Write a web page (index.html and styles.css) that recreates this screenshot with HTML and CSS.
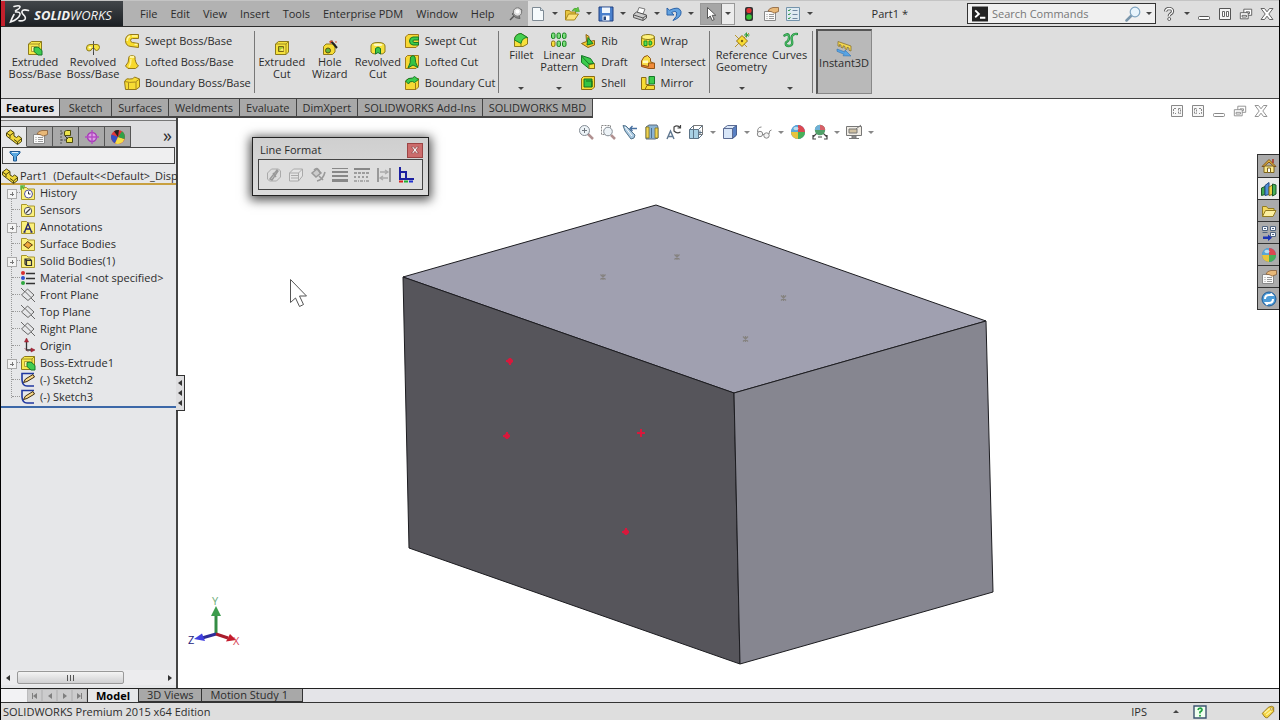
FILE: index.html
```
<!DOCTYPE html>
<html lang="en">
<head>
    <meta charset="utf-8">
    <title>SOLIDWORKS - Part1</title>
    <link rel="stylesheet" href="styles.css">
</head>
<body>
    <!-- icon sprite -->
    <svg class="sprite" width="0" height="0" aria-hidden="true">
        <symbol id="i-ds" viewBox="0 0 21 20">
            <g fill="none" stroke="#f2f2f2" stroke-width="1.6" stroke-linecap="round">
                <path d="M5 2.500q5-1.500 6 0q.3 1.700-4.500 4.200M6.500 8q5-.5 4.500 2.500q-1 4.500-9.500 7.500q1.500-4 3.500-7.500"/>
                <path d="M19.500 6.500q-5.500-1.500-6.500.8q-.6 1.700 2 4q2.500 2.800.5 4.500q-2 1.300-5.500 1"/>
            </g>
        </symbol>
        <symbol id="i-pin" viewBox="0 0 16 16">
            <path d="M2 14l4-4" stroke="#555" stroke-width="1.500"/>
            <path d="M4 8q3 5 8 4.500l-1-3.500 3-5-4-2z" fill="#888" stroke="#666"/>
            <circle cx="9.500" cy="6" r="4.200" fill="#e0e0e0" stroke="#777"/>
            <circle cx="9.500" cy="5.500" r="2" fill="#fff"/>
        </symbol>
        <symbol id="i-new" viewBox="0 0 16 16">
            <path d="M2.500 1.500h8l3 3v10h-11z" fill="#f6fafc" stroke="#7e8a94"/>
            <path d="M10.500 1.500v3h3" fill="#cfdbe4" stroke="#7e8a94"/>
        </symbol>
        <symbol id="i-open" viewBox="0 0 16 16">
            <path d="M1.500 14V4.500h4l1 1.500h5v3" fill="#e8c640" stroke="#a8861c"/>
            <path d="M1.500 14l3-6h10l-4 6z" fill="#fbe27a" stroke="#a8861c"/>
            <path d="M8 5q2-4 5-2.500l1-1.500 1.500 4.500-4.500.5 1-1.500q-2-.5-4 .5z" fill="#5cc83c" stroke="#3a8e28" stroke-width=".5"/>
        </symbol>
        <symbol id="i-save" viewBox="0 0 16 16">
            <path d="M1 1h14v14H1z" fill="#4a80cc" stroke="#1f3f80"/>
            <path d="M4 1.500h8V7H4z" fill="#f0f6fc"/>
            <path d="M4.500 9.500h7v5h-7z" fill="#fff"/>
            <path d="M5.500 10.500h2.500V14H5.500z" fill="#28487c"/>
        </symbol>
        <symbol id="i-print" viewBox="0 0 16 16">
            <path d="M5 7l2-5.500 6 1.500-2 5z" fill="#fff" stroke="#777"/>
            <path d="M1.500 8.500l3-2.500 10 3v3l-3.500 2.500-9.500-3z" fill="#ccc" stroke="#555"/>
            <path d="M2 9l9 3 3.500-2.500M11 12v2.500" fill="none" stroke="#555"/>
        </symbol>
        <symbol id="i-undo" viewBox="0 0 16 16">
            <path d="M1 2v7h7L5.500 6.700q4-2.700 5.300.3q.7 3-3.800 7.500q9-3.500 8-9q-2-6-11.500-1.300z" fill="#62a2e0" stroke="#2a62a8"/>
        </symbol>
        <symbol id="i-arrow" viewBox="0 0 16 16">
            <path d="M4.500 1.500v11l2.700-2.500 2 4.500 2-1-2-4.200h3.600z" fill="#fff" stroke="#555"/>
        </symbol>
        <symbol id="i-light" viewBox="0 0 10 16">
            <rect x="1" y="1" width="8" height="14" rx="2" fill="#333"/>
            <circle cx="5" cy="4.500" r="2.600" fill="#e23434"/>
            <circle cx="5" cy="11" r="2.800" fill="#36c436"/>
        </symbol>
        <symbol id="i-props" viewBox="0 0 16 16">
            <path d="M1.500 5.500h11v9h-11z" fill="#fafafa" stroke="#888"/>
            <path d="M3.500 8.500h1M6 8.500h5M3.500 10.500h1M6 10.500h5M3.500 12.500h1M6 12.500h5" stroke="#999"/>
            <path d="M5 5q1-3 5-3.500h5.500v4l-4 1.500q-2 0-2-1z" fill="#e8b878" stroke="#8a6038" stroke-width=".8"/>
        </symbol>
        <symbol id="i-options" viewBox="0 0 16 16">
            <path d="M1.500 1.500h13v13h-13z" fill="#dfeaf2" stroke="#7494ac"/>
            <path d="M3 4l1 1 1.500-2M3 8l1 1 1.500-2M3 12l1 1 1.500-2" fill="none" stroke="#3a9a50"/>
            <path d="M7.500 4.500h5M7.500 8.500h5M7.500 12.500h5" stroke="#7088a0"/>
        </symbol>
        <symbol id="i-prompt" viewBox="0 0 15 14">
            <path d="M0 0h15v14H0z" fill="#222"/>
            <path d="M3 3.500l3.500 3.500L3 10M7.500 10.500h5" fill="none" stroke="#fff" stroke-width="1.700"/>
        </symbol>
        <symbol id="i-search" viewBox="0 0 16 16">
            <path d="M1.500 14.500l5-5" stroke="#7a96ac" stroke-width="2.500" stroke-linecap="round"/>
            <circle cx="10" cy="6" r="4.800" fill="#e8f4fc" stroke="#7fa4c0" stroke-width="1.200"/>
        </symbol>
        <symbol id="i-help" viewBox="0 0 12 14">
            <path d="M2.500 4.500q.5-3 3.700-3q3.500.2 3.300 3q-.2 1.600-2 2.500q-1.300.8-1.300 2.300" fill="none" stroke="#555" stroke-width="3.200"/>
            <path d="M2.500 4.500q.5-3 3.700-3q3.500.2 3.300 3q-.2 1.600-2 2.500q-1.300.8-1.300 2.300" fill="none" stroke="#fff" stroke-width="1.300"/>
            <circle cx="6.200" cy="12" r="1.500" fill="#fff" stroke="#555" stroke-width=".9"/>
        </symbol>
        <symbol id="i-min" viewBox="0 0 14 14">
            <rect x="1.500" y="9.500" width="11" height="3" rx="1" fill="#fff" stroke="currentColor"/>
        </symbol>
        <symbol id="i-tile" viewBox="0 0 14 14">
            <path d="M1.500 1.500h11v11h-11z" fill="#f4f4f4" stroke="currentColor"/>
            <path d="M4.500 4.500h2v5h-2zM8.500 4.500h2v5h-2z" fill="#fff" stroke="currentColor" stroke-width=".9"/>
        </symbol>
        <symbol id="i-tilel" viewBox="0 0 14 14">
            <path d="M1.500 1.500h11v11h-11z" fill="#f8f8f8" stroke="currentColor"/>
            <path d="M6 4.500H3.500V9.500H6M8.500 4.500h2v5h-2z" fill="none" stroke="currentColor" stroke-dasharray="2 1"/>
        </symbol>
        <symbol id="i-tiler" viewBox="0 0 14 14">
            <path d="M1.500 1.500h11v11h-11z" fill="#f8f8f8" stroke="currentColor"/>
            <path d="M3.500 4.500h2v5h-2zM8 4.500h2.500v5H8" fill="none" stroke="currentColor" stroke-dasharray="2 1"/>
        </symbol>
        <symbol id="i-restore" viewBox="0 0 16 14">
            <path d="M5.500 1.500h9v7h-9z" fill="#fff" stroke="currentColor"/>
            <path d="M8 4.500h4v2H8z" fill="none" stroke="currentColor"/>
            <path d="M1.500 5.500h9v7h-9z" fill="#fff" stroke="currentColor"/>
            <path d="M3.500 8.500h5v2h-5z" fill="none" stroke="currentColor"/>
        </symbol>
        <symbol id="i-close" viewBox="0 0 14 14">
            <path d="M1 1.500h3.500L7 4.800l2.500-3.300H13L8.800 7l4.200 5.500H9.500L7 9.200l-2.500 3.300H1L5.200 7z" fill="#fff" stroke="currentColor" stroke-width=".9"/>
        </symbol>

        <!-- feature icons -->
        <symbol id="i-extrude" viewBox="0 0 16 16">
            <path d="M1.500 4l3-2.500h10V12L12 14.500H1.500z" fill="#f6e84c" stroke="#8c7a1c"/>
            <path d="M1.500 4H12v10.500M12 4l2.500-2.500" fill="none" stroke="#8c7a1c" stroke-width=".8"/>
            <path d="M4.500 6.500h5v5h-5z" fill="#fdf7a4" stroke="#a48c24" stroke-width=".8"/>
            <path d="M7 7.500l4-.5 4 3.500V15h-4L7 11.500z" fill="#40cc50" stroke="#16782a"/>
        </symbol>
        <symbol id="i-revolve" viewBox="0 0 16 16">
            <path d="M8.500 1v14" stroke="#555"/>
            <path d="M1.500 8q0-3.500 3.500-3.500h7q2.500 0 2.500 3q-.5 3-3 3q-1.500 0-2-2H7q-.5 2.500-3 2.500t-2.500-3z" fill="#f5e23e" stroke="#8c7a1c"/>
            <ellipse cx="5" cy="7.500" rx="1.500" ry="1" fill="#fffbd0"/>
            <path d="M8.500 5v4M8.500 12v3" stroke="#444"/>
        </symbol>
        <symbol id="i-sweep" viewBox="0 0 16 16">
            <path d="M14.500 1.500H7q-5.500.5-5.500 6t5.500 6l7.500 1V10.500L8.500 9.500Q6.500 9 6.500 7.300T8.500 5.500h6z" fill="#f8dc2c" stroke="#94781a"/>
            <path d="M6 3q-3 1.500-2.800 5M8 3h5.500M10.500 11.500h3" fill="none" stroke="#fff6a0" stroke-width="1.500"/>
        </symbol>
        <symbol id="i-loft" viewBox="0 0 16 16">
            <path d="M5 2.500q3-2 6 0q-.3 6 3.500 9.500l-3 2.500H4L1.500 12Q5 9 5 2.500z" fill="#f7d82c" stroke="#94781a"/>
            <ellipse cx="8" cy="3" rx="2.500" ry="1.200" fill="#fff6a0"/>
            <path d="M7 5q0 5-2 8" fill="none" stroke="#fff28c" stroke-width="1.500"/>
        </symbol>
        <symbol id="i-boundary" viewBox="0 0 16 16">
            <path d="M.5 6.500q2-4 5-2.500 4 .5 5-2l5 2V12L12 14.500H1.500z" fill="#f7dc34" stroke="#94781a"/>
            <path d="M.5 6.500q5 1.500 11 .5l4-3M12 7v7.500M4.500 7.500v7" fill="none" stroke="#a8881c"/>
        </symbol>
        <symbol id="i-cut" viewBox="0 0 16 16">
            <path d="M1.500 4l3-2.500h10V12L12 14.500H1.500z" fill="#f6e23c" stroke="#8c7a1c"/>
            <path d="M1.500 4H12v10.500M12 4l2.500-2.500" fill="none" stroke="#8c7a1c" stroke-width=".8"/>
            <path d="M4.500 6.500h5v5h-5z" fill="#a4c832" stroke="#7c6414"/>
            <path d="M5.500 10.500l2.500-2h1.500v2.500z" fill="#fff06c"/>
        </symbol>
        <symbol id="i-hole" viewBox="0 0 16 16">
            <path d="M1.500 6.500L4 4h9v8l-2.500 2.500h-9z" fill="#f6dc34" stroke="#8c7a1c"/>
            <circle cx="6" cy="10.500" r="2.500" fill="#64b83c" stroke="#5c5010"/>
            <path d="M9 1l6 7" stroke="#222" stroke-width="2"/>
            <path d="M7 2l4-1M8.500.5v3M13 2h2" stroke="#d85030"/>
        </symbol>
        <symbol id="i-revcut" viewBox="0 0 16 16">
            <path d="M1 6q0-3.500 7-3.500T15 6v6q-2 2.500-4.500 2V9q-2.500-1.500-5 0v5Q2 14 1 12z" fill="#f6e03c" stroke="#8c7a1c"/>
            <path d="M5.500 14V8.500q2.500-3 5 0V14L8 12.500z" fill="#3cc44c" stroke="#187828"/>
            <ellipse cx="8" cy="4.800" rx="4.500" ry="1.300" fill="#fffac0"/>
        </symbol>
        <symbol id="i-sweepcut" viewBox="0 0 16 16">
            <path d="M1.500 4L4 1.500h10.500V12L12 14.500H1.500z" fill="#f6d834" stroke="#a0781a"/>
            <path d="M14.500 4H9Q5.500 4.500 5.500 8T9 12h5.500V9.500H10q-1 0-1-1.300T10 7h4.500z" fill="#3ccc4c" stroke="#167828"/>
        </symbol>
        <symbol id="i-loftcut" viewBox="0 0 16 16">
            <path d="M1.500 3.500l2-2h11V12L12 14.500H1.500z" fill="#f6d834" stroke="#a0781a"/>
            <path d="M6.500 3L9 1.500 11 3q0 6 3 10.500L9 11l-5 3Q7 9 6.500 3z" fill="#34c444" stroke="#167828"/>
        </symbol>
        <symbol id="i-boundcut" viewBox="0 0 16 16">
            <path d="M1.500 6l3-2.500h10V12L12 14.500H1.500z" fill="#f6d834" stroke="#a0781a"/>
            <path d="M1.500 6q3-3.500 7-3l2-1.500 4 3-4 3-2-1Q5 6 4.500 9z" fill="#3ccc4c" stroke="#167828"/>
            <path d="M11.500 8v6" stroke="#a0781a"/>
        </symbol>
        <symbol id="i-fillet" viewBox="0 0 16 16">
            <path d="M1.500 14.500V8q0-6 6.500-6.500l6.500 4V12L10 14.500z" fill="#f8e03c" stroke="#8c7a1c"/>
            <path d="M1.500 8Q2 2 8 1.500l6.500 4Q9 5.500 8 11.500z" fill="#46d050" stroke="#188028"/>
            <path d="M8 11.500v3" stroke="#8c7a1c"/>
        </symbol>
        <symbol id="i-pattern" viewBox="0 0 16 16">
            <g fill="#7ce07c" stroke="#14801e">
                <rect x=".5" y="1" width="3.500" height="5.500" rx="1.500"/>
                <rect x="6" y="1" width="3.500" height="5.500" rx="1.500"/>
                <rect x="11.500" y="1" width="3.500" height="5.500" rx="1.500"/>
                <rect x="6" y="9" width="3.500" height="5.500" rx="1.500"/>
                <rect x="11.500" y="9" width="3.500" height="5.500" rx="1.500"/>
            </g>
            <rect x=".5" y="9" width="3.500" height="5.500" rx="1.500" fill="#f8e03c" stroke="#8c6c14"/>
        </symbol>
        <symbol id="i-rib" viewBox="0 0 16 16">
            <path d="M6 1.500l3 2v5l5.500-1V12L8 14.500l-6.500-4 5-2z" fill="#f8cc2c" stroke="#8c6414"/>
            <path d="M8 4.500l5 6-6 1.500z" fill="#34c444" stroke="#167828"/>
        </symbol>
        <symbol id="i-draft" viewBox="0 0 16 16">
            <path d="M1.500 1.500l9 3 4 6v4H9l-7.500-6z" fill="#3ccc4c" stroke="#167828"/>
            <path d="M9 10.500l5.500-1v5H9z" fill="#f8e03c" stroke="#8c6c14"/>
            <path d="M1.500 2L9 10M9 10l5-.5" stroke="#167828" fill="none"/>
        </symbol>
        <symbol id="i-shell" viewBox="0 0 16 16">
            <path d="M1.500 3.500l2-2h11v10.500L12 14.500H1.500z" fill="#f8dc34" stroke="#8c6c14"/>
            <path d="M4 4h8v8H4z" fill="#34c444" stroke="#14701e"/>
            <path d="M6 6h6v6" fill="none" stroke="#14701e"/>
        </symbol>
        <symbol id="i-wrap" viewBox="0 0 16 16">
            <path d="M1.500 4v8q2 2.500 6.500 2.500t6.500-2.500V4z" fill="#f6d834" stroke="#8c7a1c"/>
            <ellipse cx="8" cy="4" rx="6.500" ry="2.500" fill="#fff27c" stroke="#8c7a1c"/>
            <path d="M4 8h3v4.500H4zM9 8h2q2 2 0 4H9z" fill="#5ce050" stroke="#169028"/>
        </symbol>
        <symbol id="i-intersect" viewBox="0 0 16 16">
            <path d="M1.500 7q2-5.500 6-5.500l3 3v3l4 2.500v4H9l-7.500-2z" fill="#f8dc44" stroke="#945414"/>
            <path d="M1.500 11l7 1.500V9h6v5.500H9L1.500 12.500z" fill="#f08c3c" stroke="#945414"/>
            <path d="M3 6.500h5V9H3z" fill="#fffac0"/>
        </symbol>
        <symbol id="i-mirror" viewBox="0 0 16 16">
            <path d="M1.500 2.500h4.500v7h3V12l-2 2.500H1.500z" fill="#f8dc34" stroke="#8c6c14"/>
            <path d="M9 1.500h5.500V9H9z" fill="#3ccc4c" stroke="#167828"/>
            <path d="M7 10.500h7.500v4H5z" fill="#f8dc34" stroke="#8c6c14"/>
        </symbol>
        <symbol id="i-refgeo" viewBox="0 0 16 16">
            <path d="M1 3l12 12M1 15L15 1" stroke="#b8962c"/>
            <path d="M8 3.500l5.500 5.500L8 14.500 2.500 9z" fill="#f8dc34" stroke="#94701a"/>
            <path d="M12.500.5v5M10 3h5.500M11 1.500l3.500 3" stroke="#30a040"/>
            <circle cx="8" cy="9" r="1.200" fill="#7c6414"/>
        </symbol>
        <symbol id="i-curves" viewBox="0 0 16 16">
            <path d="M2.500 3.500q4-3 4.500 1t-3 6q-1 3.500 3 3.500t3-5 1-6q1-1.500 4-1" fill="none" stroke="#1e8c3c" stroke-width="2.400" stroke-linecap="round"/>
            <path d="M2.500 3.500q4-3 4.500 1t-3 6q-1 3.500 3 3.500t3-5 1-6q1-1.500 4-1" fill="none" stroke="#6cd884" stroke-width=".8"/>
        </symbol>
        <symbol id="i-instant" viewBox="0 0 16 16">
            <path d="M2 .5l13 4.500v5l-2-.7V7l-2-.7v2.200l-2-.7V5.500L7 4.800V7L5 6.300V4L3.500 3.500V5.500L2 5z" fill="#f4d850" stroke="#8c7430" stroke-width=".8"/>
            <path d="M1 8l8 3V9l6 6-8-.2 1-1.500-7-3z" fill="#58a4e4" stroke="#2f74b4" stroke-width=".6"/>
        </symbol>

        <!-- tree icons -->
        <symbol id="i-part" viewBox="0 0 16 16">
            <path d="M.5 4l4-3L8 3.500V7l2.500 1.500 2-1.500 3 2v3.500L11.500 15.500.500 7z" fill="#f0d83c" stroke="#4c4410"/>
            <path d="M.5 4L4 6.500 8 3.500M4 6.500V9M8 10.500l3.500 2.500 4-3.500M11.500 13v2" fill="none" stroke="#4c4410"/>
        </symbol>
        <symbol id="i-config" viewBox="0 0 16 16">
            <path d="M3 1v14M3 4h5M3 11h5" stroke="#555" stroke-dasharray="2 1"/>
            <path d="M6.500 2.500l2-1h4v5h-6zM8.500 9.500l2-1h4v5h-6z" fill="#ece24c" stroke="#4c4c10"/>
            <path d="M7 7l3 3" stroke="#333"/>
        </symbol>
        <symbol id="i-target" viewBox="0 0 16 16">
            <circle cx="8" cy="8" r="4.500" fill="#dca0e4" stroke="#a83cb8" stroke-width="1.500"/>
            <path d="M8 1v14M1 8h14" stroke="#b44cc4" stroke-width="1.400"/>
        </symbol>
        <symbol id="i-ball" viewBox="0 0 16 16">
            <circle cx="8" cy="8" r="7" fill="#3c78d0"/>
            <path d="M8 8V1a7 7 0 0 0-7 7z" fill="#58a8d8"/>
            <path d="M8 8V1a7 7 0 0 1 7 7z" fill="#dc4850"/>
            <path d="M8 8H1a7 7 0 0 0 7 7z" fill="#e8c43c"/>
            <path d="M8 8h7a7 7 0 0 1-7 7z" fill="#48b058"/>
            <ellipse cx="6" cy="4.500" rx="2.500" ry="1.700" fill="#fff" opacity=".6"/>
        </symbol>
        <symbol id="i-colors" viewBox="0 0 16 16">
            <circle cx="8" cy="8" r="7" fill="#e03838"/>
            <path d="M8 8L1.500 5.500A7 7 0 0 0 5 14.300z" fill="#3450c4"/>
            <path d="M8 8l-3 6.300A7 7 0 0 0 14.500 10z" fill="#f4e048"/>
            <path d="M8 8l6.500 2A7 7 0 0 0 12 2.300z" fill="#30a048"/>
            <path d="M8 8L4 2.300A7 7 0 0 1 9 1z" fill="#222"/>
        </symbol>
        <symbol id="i-funnel" viewBox="0 0 12 12">
            <path d="M1 1.500h10v1.500L7.500 6.500V11h-3V6.500L1 3z" fill="#58a8e0" stroke="#205890"/>
            <path d="M3 2.500h6" stroke="#d8f0ff"/>
        </symbol>
        <symbol id="i-folder" viewBox="0 0 16 16">
            <path d="M1.500 14.500v-12h5l1.500 1.500h6.500v10.500z" fill="#fbf07c" stroke="#a8962c"/>
        </symbol>
        <symbol id="i-history" viewBox="0 0 16 16">
            <use href="#i-folder"/>
            <circle cx="8.500" cy="9" r="4" fill="#fff" stroke="#5050a0"/>
            <path d="M8.500 6.500V9h2" fill="none" stroke="#333"/>
            <path d="M1 1l3 3M1 5V1h4" stroke="#58b83c" fill="none" stroke-width="1.500"/>
        </symbol>
        <symbol id="i-sensor" viewBox="0 0 16 16">
            <use href="#i-folder"/>
            <circle cx="8" cy="9" r="3.700" fill="#f4f4f4" stroke="#555"/>
            <path d="M6 11l4-4" stroke="#444" stroke-width="1.300"/>
        </symbol>
        <symbol id="i-annot" viewBox="0 0 16 16">
            <use href="#i-folder"/>
            <path d="M4.500 13L8 4.500l3.500 8.500M6 10h4M3.500 13h2M10.500 13h2" fill="none" stroke="#22226c" stroke-width="1.300"/>
        </symbol>
        <symbol id="i-surface" viewBox="0 0 16 16">
            <use href="#i-folder"/>
            <path d="M3.500 9Q6 8 7.500 5.500L12.500 9Q10 10 8.500 12.500z" fill="#f0a83c" stroke="#5c3c10"/>
        </symbol>
        <symbol id="i-solid" viewBox="0 0 16 16">
            <use href="#i-folder"/>
            <path d="M5 6h5l1.500 1.500v5h-5L5 11zM5 6l1.500 1.500H11.500M6.500 7.500v5" fill="none" stroke="#333" stroke-width="1.200"/>
        </symbol>
        <symbol id="i-material" viewBox="0 0 16 16">
            <circle cx="3" cy="3" r="2" fill="#d83030"/>
            <circle cx="3" cy="8" r="2" fill="#3050d0"/>
            <circle cx="3" cy="13" r="2" fill="#30a840"/>
            <path d="M6 3.500h9M6 8.500h9M6 13.500h9" stroke="#333" stroke-width="1.500"/>
        </symbol>
        <symbol id="i-plane" viewBox="0 0 16 16">
            <path d="M7.500 2l6.500 6-6 5.500L1.500 8zM1 1l4 4M11 11l4 4M5 4.500l6 6" fill="none" stroke="#666"/>
        </symbol>
        <symbol id="i-origin" viewBox="0 0 16 16">
            <path d="M6.500 2v10h7" fill="none" stroke="#333" stroke-width="1.300"/>
            <path d="M6.500 0l2 4h-4zM15 12l-4-2v4zM4.500 10l4 4" fill="#b02838" stroke="#902030" stroke-width=".6"/>
        </symbol>
        <symbol id="i-sketch" viewBox="0 0 16 16">
            <path d="M14 1.500H2V8q.5 6 5 6h7" fill="none" stroke="#2038a0" stroke-width="1.600"/>
            <path d="M3.500 10.500l2-3.500 7.500-4.500 1.500 2.500L7 9.500z" fill="#f8d888" stroke="#3c2c10"/>
        </symbol>

        <!-- view icons -->
        <symbol id="i-zoomfit" viewBox="0 0 16 16">
            <path d="M10 10l5 5" stroke="#b09090" stroke-width="2.500"/>
            <circle cx="6.500" cy="6.500" r="5" fill="#edf3f7" stroke="#848c94"/>
            <path d="M6.500 4v5M4 6.500h5" stroke="#707880"/>
        </symbol>
        <symbol id="i-zoomarea" viewBox="0 0 16 16">
            <path d="M11 11l4 4" stroke="#b09090" stroke-width="2.500"/>
            <path d="M1.500 1.500h9v9h-9z" fill="none" stroke="#888" stroke-dasharray="2 1"/>
            <circle cx="8" cy="7.500" r="4.300" fill="#edf3f7" stroke="#848c94"/>
        </symbol>
        <symbol id="i-prev" viewBox="0 0 16 16">
            <path d="M1 1.500l3 .5 9 9-1 3-3 1-6-8z" fill="#a8c8e0" stroke="#54748c"/>
            <path d="M3 3l7 9" stroke="#fff"/>
            <path d="M15 4.500H8M10.500 2L8 4.500 10.500 7" fill="none" stroke="#4870a0" stroke-width="1.300"/>
        </symbol>
        <symbol id="i-section" viewBox="0 0 16 16">
            <path d="M2 3l3-2h8l1 2v11l-3 1H2z" fill="#8cb4d4" stroke="#5c6c7c"/>
            <path d="M2 3h3v11H2zM11 4h3v10h-3z" fill="#f0d454" stroke="#84741c" stroke-width=".8"/>
            <path d="M7.500 4v10" stroke="#4c7090"/>
        </symbol>
        <symbol id="i-dynview" viewBox="0 0 16 16">
            <path d="M1 15L4.500 7l3.500 8M2.500 12.500h4" fill="none" stroke="#607890" stroke-width="1.400"/>
            <path d="M14.500 4q-3-3.500-6.500-1v4q3 3 6.500 1M14.500 1v3h-3" fill="none" stroke="#444" stroke-width="1.200"/>
        </symbol>
        <symbol id="i-orient" viewBox="0 0 16 16">
            <path d="M5.500 1.500h9v9h-9z" fill="#fff" stroke="#777"/>
            <path d="M1.500 5.500h9v9h-9z" fill="#a8d0e4" stroke="#5c7488"/>
            <path d="M1.500 5.500l4-4M10.500 5.500l4-4M10.500 14.500l4-4M10 8.500h4M12 6.500v4M5.500 5.500v9" fill="none" stroke="#5c7488"/>
        </symbol>
        <symbol id="i-style" viewBox="0 0 16 16">
            <path d="M1.500 4.500l4-3h9v9.500l-4 3.500h-9z" fill="#d8e6f8" stroke="#5c6c94"/>
            <path d="M10.500 4.500l4-3V11l-4 3.500z" fill="#5880c4" stroke="#486090"/>
            <path d="M1.500 4.500h9v10" fill="none" stroke="#5c6c94"/>
        </symbol>
        <symbol id="i-glasses" viewBox="0 0 16 16">
            <g fill="#f4f4f4" stroke="#888">
                <circle cx="4" cy="10" r="2.700"/>
                <circle cx="10.500" cy="11.500" r="2.700"/>
                <path d="M1.500 8q0-5 4-5M7 10l1 1M13 10q0-4 2.500-4" fill="none"/>
            </g>
        </symbol>
        <symbol id="i-scene" viewBox="0 0 16 16">
            <path d="M1 13l4-4h6l4 4M1 11v4h3M15 11v4h-3M6 13h4" fill="none" stroke="#444" stroke-width="1.200"/>
            <circle cx="8" cy="6" r="5.200" fill="#50a068"/>
            <path d="M8 6V.8A5.200 5.200 0 0 0 2.800 6z" fill="#70b0d8"/>
            <path d="M8 6V.8A5.200 5.200 0 0 1 13.200 6z" fill="#d86068"/>
        </symbol>
        <symbol id="i-monitor" viewBox="0 0 16 16">
            <path d="M.5 2.500h15v9H.5z" fill="#f0ece4" stroke="#777"/>
            <path d="M3 5h8v4H3zM10 5l5-4" fill="#d0c0a0" stroke="#777"/>
            <path d="M6 12h4v2H6zM3 14.500h10" stroke="#777" fill="#999"/>
        </symbol>

        <!-- task pane icons -->
        <symbol id="i-home" viewBox="0 0 16 16">
            <path d="M3 8h10v6.500H3z" fill="#fbe98c" stroke="#7c641c"/>
            <path d="M1 8.500L8 1.500l7 7h-2L8 4 3 8.500z" fill="#e8b83c" stroke="#7c541c"/>
            <path d="M6.500 10h3v4.500h-3z" fill="#fff" stroke="#7c641c"/>
            <path d="M12 1v4" stroke="#a83020" stroke-width="1.500"/>
        </symbol>
        <symbol id="i-library" viewBox="0 0 16 16">
            <path d="M.5 7l3.500-1.500v8l-3.500 1z" fill="#40a850" stroke="#1c5828"/>
            <path d="M4 4.500l4-3v12l-4 1z" fill="#5090d8" stroke="#204880"/>
            <path d="M8 6l3.500-2v9.500l-3.500 1z" fill="#ecd044" stroke="#80701c"/>
            <path d="M11.500 3l3.500 1v9l-3.500 2z" fill="#48b058" stroke="#1c5828"/>
        </symbol>
        <symbol id="i-folder2" viewBox="0 0 16 16">
            <path d="M1.500 13.500V3.500h4l1.500 2h6v2" fill="#f4d860" stroke="#947c20"/>
            <path d="M1.500 13.500l3-6h10.500l-3 6z" fill="#fdf0a0" stroke="#947c20"/>
        </symbol>
        <symbol id="i-palette" viewBox="0 0 16 16">
            <path d="M1.500 1.500h5v4h-5zM9.500 1.500h5v4h-5zM9.500 7.500h5v4h-5z" fill="#f4f8ff" stroke="#506480"/>
            <path d="M1.500 7.500h5M3 3.500h2M11 3.500h2M11 9.500h2" stroke="#506480"/>
            <path d="M2 11.500h5v-2l4 3.200-4 3.200v-2H2z" fill="#1c34b4"/>
        </symbol>
        <symbol id="i-recycle" viewBox="0 0 16 16">
            <circle cx="8" cy="8" r="7" fill="#4c9cd8" stroke="#205c98"/>
            <path d="M4 8q0-4 4-4h3L9.500 2.500M12 8q0 4-4 4H5l1.500 2" fill="none" stroke="#fff" stroke-width="2"/>
        </symbol>
        <symbol id="i-tag" viewBox="0 0 16 16">
            <path d="M1.500 9.500l7-7q4-2 6 0v5l-7 7q-3 1-6-5z" fill="#f4d444" stroke="#8c6c14"/>
            <path d="M4 9l6-5M6 11.500l6-5" stroke="#fff4a0" stroke-width="1.500"/>
            <circle cx="12" cy="4.500" r="1.200" fill="#fff" stroke="#8c6c14" stroke-width=".6"/>
        </symbol>
        <symbol id="i-helpbox" viewBox="0 0 14 14">
            <path d="M1 1h12v12H1z" fill="#f0fff0" stroke="#3c5470" stroke-width="1.400"/>
            <path d="M5 5q.3-1.800 2.200-1.800 2 .2 1.800 1.800-.3 1.200-2 2v1.500" fill="none" stroke="#20a040" stroke-width="1.700"/>
            <circle cx="7" cy="10.800" r="1" fill="#20a040"/>
        </symbol>

        <!-- line format icons -->
        <symbol id="i-layerprop" viewBox="0 0 16 16">
            <path d="M1.500 6l4-4h7l2 2v6l-4 4h-7l-2-2z" fill="#ddd" stroke="#aaa"/>
            <path d="M4 12l7-9 1 1-6 9zM7 6l3 4" fill="none" stroke="#999" stroke-width="1.400"/>
        </symbol>
        <symbol id="i-layer" viewBox="0 0 16 16">
            <path d="M1.500 6l4-4h9v7l-4 5h-9z" fill="#e4e4e4" stroke="#aaa"/>
            <path d="M1.500 6h9l4-4M10.500 6v8M3 8.500h7M3 11h7" fill="none" stroke="#aaa"/>
        </symbol>
        <symbol id="i-linecolor" viewBox="0 0 16 16">
            <path d="M2 6l5-4 4 4-5 4z" fill="#ccc" stroke="#999" stroke-width="1.500"/>
            <path d="M4 3q4-4 6 3M15 5q-2 8-8 9M9 9l4 4" fill="none" stroke="#999" stroke-width="1.600"/>
        </symbol>
        <symbol id="i-thick" viewBox="0 0 16 16">
            <path d="M0 1.500h16" stroke="#888"/>
            <path d="M0 5h16" stroke="#888" stroke-width="2"/>
            <path d="M0 9h16" stroke="#888" stroke-width="2"/>
            <path d="M0 13.500h16" stroke="#888" stroke-width="3"/>
        </symbol>
        <symbol id="i-dash" viewBox="0 0 16 16">
            <path d="M0 2h16" stroke="#888" stroke-width="2"/>
            <path d="M0 6h16" stroke="#888" stroke-width="1.500" stroke-dasharray="3 1"/>
            <path d="M0 10h16" stroke="#888" stroke-width="1.500" stroke-dasharray="2 2"/>
            <path d="M0 14h16" stroke="#999" stroke-width="1.500" stroke-dasharray="3 1 1 1"/>
        </symbol>
        <symbol id="i-hideedge" viewBox="0 0 16 16">
            <path d="M2 1v14M14 1v14" stroke="#999" stroke-width="2"/>
            <path d="M4 5h8M9 3l3 2-3 2M12 11H4M7 9l-3 2 3 2" fill="none" stroke="#aaa" stroke-width="1.300"/>
        </symbol>
        <symbol id="i-colormode" viewBox="0 0 16 16">
            <path d="M2 0v12h14M2 5h6v7" fill="none" stroke="#1c20a0" stroke-width="2"/>
            <path d="M1 14.500h4" stroke="#d82020" stroke-width="2"/>
            <path d="M6 14.500h4" stroke="#20b030" stroke-width="2"/>
            <path d="M11 14.500h4" stroke="#2030d0" stroke-width="2"/>
        </symbol>
    </svg>

    <div class="app">
        <header class="title-bar">
            <div class="logo">
                <svg class="logo-mark"><use href="#i-ds"/></svg>
                <span class="logo-text"><b>SOLID</b>WORKS</span>
            </div>
            <nav class="menu">
                <button>File</button>
                <button>Edit</button>
                <button>View</button>
                <button>Insert</button>
                <button>Tools</button>
                <button>Enterprise PDM</button>
                <button>Window</button>
                <button>Help</button>
                <button aria-label="Pin menu"><svg class="icon"><use href="#i-pin"/></svg></button>
            </nav>
            <div class="quick-bar">
                <button class="drop" aria-label="New"><svg class="icon"><use href="#i-new"/></svg><i class="caret"></i></button>
                <button class="drop" aria-label="Open"><svg class="icon"><use href="#i-open"/></svg><i class="caret"></i></button>
                <button class="drop" aria-label="Save"><svg class="icon"><use href="#i-save"/></svg><i class="caret"></i></button>
                <button class="drop" aria-label="Print"><svg class="icon"><use href="#i-print"/></svg><i class="caret"></i></button>
                <button class="drop" aria-label="Undo"><svg class="icon"><use href="#i-undo"/></svg><i class="caret"></i></button>
                <button class="select-tool" aria-label="Select"><span class="select-icon"><svg class="icon"><use href="#i-arrow"/></svg></span><i class="caret"></i></button>
                <button aria-label="Rebuild"><svg class="icon icon-narrow"><use href="#i-light"/></svg></button>
                <button aria-label="File properties"><svg class="icon"><use href="#i-props"/></svg></button>
                <button class="drop" aria-label="Options"><svg class="icon"><use href="#i-options"/></svg><i class="caret"></i></button>
            </div>
            <div class="doc-name">Part1 *</div>
            <div class="search">
                <svg class="icon"><use href="#i-prompt"/></svg>
                <input type="text" placeholder="Search Commands" aria-label="Search Commands">
                <button class="drop" aria-label="Search"><svg class="icon"><use href="#i-search"/></svg><i class="caret"></i></button>
            </div>
            <div class="window-buttons">
                <button class="drop" aria-label="Help"><svg class="icon"><use href="#i-help"/></svg><i class="caret"></i></button>
                <button aria-label="Minimize"><svg class="icon"><use href="#i-min"/></svg></button>
                <button aria-label="Tile"><svg class="icon"><use href="#i-tile"/></svg></button>
                <button aria-label="Restore"><svg class="icon"><use href="#i-restore"/></svg></button>
                <button aria-label="Close"><svg class="icon"><use href="#i-close"/></svg></button>
            </div>
        </header>

        <section class="ribbon">
            <div class="group">
                <button class="big wide"><svg class="icon"><use href="#i-extrude"/></svg><span>Extruded<br>Boss/Base</span></button>
                <button class="big wide"><svg class="icon"><use href="#i-revolve"/></svg><span>Revolved<br>Boss/Base</span></button>
                <div class="stack">
                    <button class="small"><svg class="icon"><use href="#i-sweep"/></svg>Swept Boss/Base</button>
                    <button class="small"><svg class="icon"><use href="#i-loft"/></svg>Lofted Boss/Base</button>
                    <button class="small"><svg class="icon"><use href="#i-boundary"/></svg>Boundary Boss/Base</button>
                </div>
            </div>
            <div class="group">
                <button class="big"><svg class="icon"><use href="#i-cut"/></svg><span>Extruded<br>Cut</span></button>
                <button class="big"><svg class="icon"><use href="#i-hole"/></svg><span>Hole<br>Wizard</span></button>
                <button class="big"><svg class="icon"><use href="#i-revcut"/></svg><span>Revolved<br>Cut</span></button>
                <div class="stack">
                    <button class="small"><svg class="icon"><use href="#i-sweepcut"/></svg>Swept Cut</button>
                    <button class="small"><svg class="icon"><use href="#i-loftcut"/></svg>Lofted Cut</button>
                    <button class="small"><svg class="icon"><use href="#i-boundcut"/></svg>Boundary Cut</button>
                </div>
            </div>
            <div class="group">
                <button class="big menu-big slim"><svg class="icon"><use href="#i-fillet"/></svg><span>Fillet</span><i class="caret"></i></button>
                <button class="big menu-big slim"><svg class="icon"><use href="#i-pattern"/></svg><span>Linear<br>Pattern</span><i class="caret"></i></button>
                <div class="stack">
                    <button class="small"><svg class="icon"><use href="#i-rib"/></svg>Rib</button>
                    <button class="small"><svg class="icon"><use href="#i-draft"/></svg>Draft</button>
                    <button class="small"><svg class="icon"><use href="#i-shell"/></svg>Shell</button>
                </div>
                <div class="stack">
                    <button class="small"><svg class="icon"><use href="#i-wrap"/></svg>Wrap</button>
                    <button class="small"><svg class="icon"><use href="#i-intersect"/></svg>Intersect</button>
                    <button class="small"><svg class="icon"><use href="#i-mirror"/></svg>Mirror</button>
                </div>
            </div>
            <div class="group">
                <button class="big menu-big wide"><svg class="icon"><use href="#i-refgeo"/></svg><span>Reference<br>Geometry</span><i class="caret"></i></button>
                <button class="big menu-big slim"><svg class="icon"><use href="#i-curves"/></svg><span>Curves</span><i class="caret"></i></button>
            </div>
            <button class="big wide pressed"><svg class="icon"><use href="#i-instant"/></svg><span>Instant3D</span></button>
        </section>

        <div class="tab-row">
            <nav class="tabs">
                <button class="tab active">Features</button>
                <button class="tab">Sketch</button>
                <button class="tab">Surfaces</button>
                <button class="tab">Weldments</button>
                <button class="tab">Evaluate</button>
                <button class="tab">DimXpert</button>
                <button class="tab">SOLIDWORKS Add-Ins</button>
                <button class="tab">SOLIDWORKS MBD</button>
            </nav>
            <div class="doc-buttons">
                <button aria-label="Expand left"><svg class="icon"><use href="#i-tilel"/></svg></button>
                <button aria-label="Expand right"><svg class="icon"><use href="#i-tiler"/></svg></button>
                <button aria-label="Minimize document"><svg class="icon"><use href="#i-min"/></svg></button>
                <button aria-label="Restore document"><svg class="icon"><use href="#i-restore"/></svg></button>
                <button aria-label="Close document"><svg class="icon"><use href="#i-close"/></svg></button>
            </div>
        </div>

        <main class="workspace">
            <aside class="side-panel">
                <div class="panel-tabs">
                    <button class="active" aria-label="Feature tree"><svg class="icon"><use href="#i-part"/></svg></button>
                    <button aria-label="Properties"><svg class="icon"><use href="#i-props"/></svg></button>
                    <button aria-label="Configurations"><svg class="icon"><use href="#i-config"/></svg></button>
                    <button aria-label="DimXpert manager"><svg class="icon"><use href="#i-target"/></svg></button>
                    <button aria-label="Display manager"><svg class="icon"><use href="#i-colors"/></svg></button>
                    <button class="more">»</button>
                </div>
                <div class="filter">
                    <svg class="icon"><use href="#i-funnel"/></svg>
                    <input type="text" aria-label="Filter tree">
                </div>
                <div class="tree-root"><svg class="icon"><use href="#i-part"/></svg>Part1&nbsp; (Default&lt;&lt;Default&gt;_Disp</div>
                <ul class="tree">
                    <li class="expand"><svg class="icon"><use href="#i-history"/></svg>History</li>
                    <li><svg class="icon"><use href="#i-sensor"/></svg>Sensors</li>
                    <li class="expand"><svg class="icon"><use href="#i-annot"/></svg>Annotations</li>
                    <li><svg class="icon"><use href="#i-surface"/></svg>Surface Bodies</li>
                    <li class="expand"><svg class="icon"><use href="#i-solid"/></svg>Solid Bodies(1)</li>
                    <li><svg class="icon"><use href="#i-material"/></svg>Material &lt;not specified&gt;</li>
                    <li><svg class="icon"><use href="#i-plane"/></svg>Front Plane</li>
                    <li><svg class="icon"><use href="#i-plane"/></svg>Top Plane</li>
                    <li><svg class="icon"><use href="#i-plane"/></svg>Right Plane</li>
                    <li><svg class="icon"><use href="#i-origin"/></svg>Origin</li>
                    <li class="expand"><svg class="icon"><use href="#i-extrude"/></svg>Boss-Extrude1</li>
                    <li><svg class="icon"><use href="#i-sketch"/></svg>(-) Sketch2</li>
                    <li><svg class="icon"><use href="#i-sketch"/></svg>(-) Sketch3</li>
                </ul>
                <div class="scrollbar">
                    <i class="arrow left"></i>
                    <div class="track"><div class="thumb"><i class="grip"></i></div></div>
                    <i class="arrow right"></i>
                </div>
                <button class="splitter" aria-label="Collapse panel"><i class="arrow left"></i><i class="arrow left"></i><i class="arrow left"></i></button>
            </aside>

            <section class="viewport">
                <svg class="model" width="600" height="470" viewBox="398 200 600 470">
                    <g stroke="#1c1c20" stroke-width="1" stroke-linejoin="round">
                        <path d="M403 277L656 205 986 321 734 393z" fill="#a0a0b0"/>
                        <path d="M403 277L734 393 740 664 409 548z" fill="#56555b"/>
                        <path d="M734 393L986 321 993 592 740 664z" fill="#868690"/>
                    </g>
                    <g stroke="#85827f" stroke-width="1.200">
                        <path d="M600.500 274.500l5 5m0-5l-5 5M603 274v6"/>
                        <path d="M674.500 254.500l5 5m0-5l-5 5M677 254v6"/>
                        <path d="M781 295.500l5 5m0-5l-5 5M783.500 295v6"/>
                        <path d="M743 336.500l5 5m0-5l-5 5M745.500 336v6"/>
                    </g>
                    <g stroke="#d8183c" stroke-width="2">
                        <path d="M506 361h7M510 358v7"/>
                        <path d="M503 436h7M507 432v7"/>
                        <path d="M637 433h8M641 429v8"/>
                        <path d="M622 532h7M626 528v7"/>
                    </g>
                    <g fill="#d8183c">
                        <circle cx="510" cy="361" r="2.700"/>
                        <circle cx="507" cy="436" r="2.700"/>
                        <circle cx="626" cy="532" r="2.700"/>
                    </g>
                </svg>

                <div class="view-bar">
                    <button aria-label="Zoom to fit"><svg class="icon"><use href="#i-zoomfit"/></svg></button>
                    <button aria-label="Zoom to area"><svg class="icon"><use href="#i-zoomarea"/></svg></button>
                    <button aria-label="Previous view"><svg class="icon"><use href="#i-prev"/></svg></button>
                    <button aria-label="Section view"><svg class="icon"><use href="#i-section"/></svg></button>
                    <button aria-label="Dynamic annotation views"><svg class="icon"><use href="#i-dynview"/></svg></button>
                    <button class="drop" aria-label="View orientation"><svg class="icon"><use href="#i-orient"/></svg><i class="caret"></i></button>
                    <button class="drop" aria-label="Display style"><svg class="icon"><use href="#i-style"/></svg><i class="caret"></i></button>
                    <button class="drop" aria-label="Hide/show items"><svg class="icon"><use href="#i-glasses"/></svg><i class="caret"></i></button>
                    <button aria-label="Edit appearance"><svg class="icon"><use href="#i-ball"/></svg></button>
                    <button class="drop" aria-label="Apply scene"><svg class="icon"><use href="#i-scene"/></svg><i class="caret"></i></button>
                    <button class="drop" aria-label="View settings"><svg class="icon"><use href="#i-monitor"/></svg><i class="caret"></i></button>
                </div>

                <div class="line-format">
                    <div class="line-title">Line Format<button class="line-close" aria-label="Close toolbar"><svg class="icon"><use href="#i-close"/></svg></button></div>
                    <div class="line-tools">
                        <button aria-label="Layer properties"><svg class="icon"><use href="#i-layerprop"/></svg></button>
                        <button aria-label="Change layer"><svg class="icon"><use href="#i-layer"/></svg></button>
                        <button aria-label="Line color"><svg class="icon"><use href="#i-linecolor"/></svg></button>
                        <button aria-label="Line thickness"><svg class="icon"><use href="#i-thick"/></svg></button>
                        <button aria-label="Line style"><svg class="icon"><use href="#i-dash"/></svg></button>
                        <button aria-label="Hide/show edges"><svg class="icon"><use href="#i-hideedge"/></svg></button>
                        <button aria-label="Color display mode"><svg class="icon"><use href="#i-colormode"/></svg></button>
                    </div>
                </div>

                <svg class="pointer" width="20" height="30" viewBox="0 0 20 30">
                    <path d="M1.500 1.500v23l5-4.500 4 8.500 4-2-4-8.500h7z" fill="#fff" stroke="#555"/>
                </svg>

                <svg class="triad" width="56" height="54" viewBox="186 594 56 54">
                    <path d="M216 634v-20" stroke="#348c44" stroke-width="3"/>
                    <path d="M216 606l5 10h-10z" fill="#3c9c4c"/>
                    <path d="M216 634l-14 4" stroke="#2c2c98" stroke-width="3"/>
                    <path d="M194 639l8-5.500 3 7.500z" fill="#4040e0"/>
                    <path d="M216 634l12 4" stroke="#a81c2c" stroke-width="3"/>
                    <path d="M236 640l-6-6-4 7.500z" fill="#c41c2c"/>
                    <text x="212" y="605" fill="#6cac78">Y</text>
                    <text x="188" y="644" fill="#24247c">Z</text>
                    <text x="233" y="645" fill="#d84858">X</text>
                </svg>

                <nav class="task-pane">
                    <button aria-label="Resources"><svg class="icon"><use href="#i-home"/></svg></button>
                    <button class="active" aria-label="Design library"><svg class="icon"><use href="#i-library"/></svg></button>
                    <button aria-label="File explorer"><svg class="icon"><use href="#i-folder2"/></svg></button>
                    <button aria-label="View palette"><svg class="icon"><use href="#i-palette"/></svg></button>
                    <button aria-label="Appearances"><svg class="icon"><use href="#i-ball"/></svg></button>
                    <button aria-label="Custom properties"><svg class="icon"><use href="#i-props"/></svg></button>
                    <button aria-label="Forum"><svg class="icon"><use href="#i-recycle"/></svg></button>
                </nav>
            </section>
        </main>

        <div class="sheet-row">
            <div class="sheet-nav">
                <button aria-label="First"><i class="bar"></i><i class="arrow left"></i></button>
                <button aria-label="Previous"><i class="arrow left"></i></button>
                <button aria-label="Next"><i class="arrow right"></i></button>
                <button aria-label="Last"><i class="arrow right"></i><i class="bar"></i></button>
            </div>
            <button class="sheet active">Model</button>
            <button class="sheet">3D Views</button>
            <button class="sheet">Motion Study 1</button>
        </div>

        <footer class="status-bar">
            <span class="edition">SOLIDWORKS Premium 2015 x64 Edition</span>
            <button class="units">IPS<i class="caret up"></i></button>
            <button aria-label="Quick help"><svg class="icon"><use href="#i-helpbox"/></svg></button>
            <button aria-label="Tags"><svg class="icon"><use href="#i-tag"/></svg></button>
        </footer>
    </div>
</body>
</html>
```
FILE: styles.css
```
* {
    box-sizing: border-box;
}

body {
    margin: 0;
    font-family: "Open Sans", "Noto Sans", sans-serif;
    font-size: 11px;
    line-height: 12px;
    color: #2c2c2c;
    background: #fff;
}

button {
    display: flex;
    align-items: center;
    justify-content: center;
    padding: 0;
    border: none;
    background: none;
    font: inherit;
    color: inherit;
    white-space: nowrap;
}

input {
    min-width: 0;
    padding: 0;
    border: none;
    background: none;
    font: inherit;
    color: inherit;
    outline: none;
}

.sprite {
    position: absolute;
}

.icon {
    width: 16px;
    height: 16px;
    flex: none;
    display: block;
}

.caret {
    width: 0;
    height: 0;
    border: 3px solid transparent;
    border-top-color: #444;
    border-bottom: none;
}

.caret.up {
    border-top: none;
    border-bottom: 3px solid #444;
}

.arrow {
    width: 0;
    height: 0;
    border: 3px solid transparent;
}

.arrow.left {
    border-right: 4px solid #333;
    border-left: none;
}

.arrow.right {
    border-left: 4px solid #333;
    border-right: none;
}

.app {
    display: flex;
    flex-direction: column;
    height: 100vh;
    border-left: 1px solid #000;
    border-right: 1px solid #000;
    background: #dedede;
}

/* title bar */
.title-bar {
    display: flex;
    align-items: stretch;
    height: 27px;
    flex: none;
    border-top: 1px solid #c4c4c4;
    border-bottom: 1px solid #2c2c2c;
}

.logo {
    display: flex;
    align-items: center;
    gap: 4px;
    width: 122px;
    padding-left: 4px;
    border-left: 4px solid #c4202c;
    background: linear-gradient(#42464a, #1c2024);
    color: #f2f2f2;
}

.logo-mark {
    width: 21px;
    height: 20px;
    flex: none;
}

.logo-text {
    padding-top: 3px;
    font-size: 13px;
    font-style: italic;
}

.menu {
    display: flex;
    gap: 13px;
    padding: 0 4px 0 17px;
    background: #b2b2b2;
}

.quick-bar {
    display: flex;
    align-items: center;
    gap: 6px;
    padding-left: 2px;
}

.drop {
    gap: 6px;
}

.select-tool {
    height: 22px;
    border: 1px solid #999;
    background: #ececec;
    gap: 3px;
    padding-right: 3px;
}

.select-icon {
    padding: 2px;
    background: #a6a6a6;
    border-right: 1px solid #777;
}

.icon-narrow {
    width: 10px;
}

.quick-bar .icon-narrow {
    margin: 0 3px;
}

.doc-name {
    flex: 1;
    align-self: center;
    text-align: center;
}

.search {
    display: flex;
    align-items: center;
    align-self: center;
    gap: 4px;
    width: 189px;
    height: 21px;
    padding: 0 3px 0 4px;
    border: 1px solid #333;
    background: #f0f0f0;
}

.search input {
    flex: 1;
}

.search input::placeholder {
    color: #777;
    opacity: 1;
}

.search .drop {
    gap: 5px;
}

.window-buttons {
    display: flex;
    align-items: center;
    gap: 7px;
    padding: 0 5px 0 6px;
    color: #555;
}

.window-buttons .icon {
    width: 14px;
    height: 14px;
}

.window-buttons .drop {
    gap: 8px;
}

/* ribbon */
.ribbon {
    display: flex;
    height: 71px;
    flex: none;
    padding: 2px 0 4px 5px;
}

.group {
    display: flex;
    padding: 2px 0 1px;
}

.group::after {
    content: "";
    width: 1px;
    margin: 0 3px;
    background: #777;
}

.big {
    flex-direction: column;
    min-width: 48px;
    padding-bottom: 4px;
}

.wide {
    min-width: 58px;
}

.slim {
    min-width: 38px;
}

.menu-big {
    justify-content: flex-start;
    padding: 1px 0 3px;
    gap: 1px;
}

.menu-big .caret {
    margin-top: auto;
}

.pressed {
    justify-content: flex-start;
    min-width: 56px;
    padding-top: 10px;
    border: 1px solid #888;
    border-top: 2px solid #555;
    border-left: 2px solid #555;
    background: #b9b9b9;
}

.stack {
    display: flex;
    flex-direction: column;
    justify-content: space-between;
    padding-left: 2px;
}

.stack + .stack {
    padding-left: 12px;
}

.small {
    flex: 1;
    gap: 5px;
    justify-content: flex-start;
}

/* command tabs */
.tab-row {
    display: flex;
    justify-content: space-between;
    height: 20px;
    flex: none;
    border-top: 1px solid #444;
    background: #fff;
}

.tabs {
    display: flex;
}

.tab {
    min-width: 52px;
    padding: 0 6px;
    border-right: 1px solid #444;
    border-bottom: 2px solid #444;
    background: #a8a8a8;
}

.tab.active {
    padding: 0 5px;
    background: #e4e4e6;
    font-weight: bold;
    color: #000;
}

.doc-buttons {
    display: flex;
    align-items: flex-end;
    gap: 7px;
    padding-right: 11px;
    color: #888;
}

.doc-buttons .icon {
    width: 14px;
    height: 14px;
}

/* workspace */
.workspace {
    display: flex;
    flex: 1;
    min-height: 0;
    background: #fff;
}

.side-panel {
    position: relative;
    z-index: 1;
    display: flex;
    flex-direction: column;
    width: 177px;
    border-right: 2px solid #444;
    background: #e6e7e9;
}

.panel-tabs {
    display: flex;
    height: 27px;
    margin-top: 2px;
    border-top: 1px solid #777;
    padding-top: 5px;
    background: #dedee0;
}

.panel-tabs button {
    width: 26px;
    border: 1px solid #555;
    border-left: none;
    background: #a9a9a9;
}

.panel-tabs .active {
    border-color: #555 #555 #e6e7e9 #e6e7e9;
    background: #e6e7e9;
}

.panel-tabs .more {
    width: auto;
    margin-left: auto;
    padding: 0 4px 4px 0;
    border: none;
    background: none;
    font-size: 18px;
}

.filter {
    display: flex;
    align-items: center;
    height: 17px;
    margin: 0 1px 4px;
    padding-left: 6px;
    border: 1px solid #444;
    background: #efeff0;
}

.filter .icon {
    width: 12px;
    height: 12px;
}

.filter input {
    flex: 1;
}

.tree-root {
    display: flex;
    align-items: center;
    gap: 2px;
    height: 17px;
    padding-left: 1px;
    border-bottom: 2px solid #c8a040;
    white-space: nowrap;
}

.tree {
    position: relative;
    margin: 0;
    padding: 0;
    list-style: none;
    border-bottom: 2px solid #3c68a8;
}

.tree::before {
    content: "";
    position: absolute;
    left: 10px;
    top: 8px;
    bottom: 8px;
    border-left: 1px dotted #999;
}

.tree li {
    position: relative;
    display: flex;
    align-items: center;
    gap: 4px;
    height: 17px;
    padding: 0 0 2px 19px;
}

.tree li::before {
    content: "";
    position: absolute;
    left: 11px;
    top: 7px;
    width: 8px;
    border-top: 1px dotted #999;
}

.tree .expand::after {
    content: "";
    position: absolute;
    left: 6px;
    top: 4px;
    width: 8px;
    height: 8px;
    border: 1px solid #aaa;
    background: linear-gradient(#777, #777) center / 4px 1px no-repeat, linear-gradient(#777, #777) center / 1px 4px no-repeat, #f4f4f4;
}

.scrollbar {
    display: flex;
    align-items: center;
    gap: 7px;
    height: 15px;
    margin: auto 0 3px;
    padding: 0 4px 0 5px;
    background: #ececee;
}

.track {
    flex: 1;
}

.thumb {
    display: flex;
    align-items: center;
    justify-content: center;
    width: 74%;
    height: 13px;
    border: 1px solid #999;
    border-radius: 2px;
    background: linear-gradient(#f4f4f4, #d0d0d2);
}

.grip {
    width: 7px;
    height: 6px;
    background: repeating-linear-gradient(90deg, #555 0, #555 1px, transparent 1px, transparent 3px);
}

.splitter {
    position: absolute;
    left: 175px;
    top: 257px;
    flex-direction: column;
    justify-content: space-evenly;
    width: 9px;
    height: 36px;
    border: 1px solid #333;
    border-left: none;
    background: #dedee0;
}

/* graphics area */
.viewport {
    position: relative;
    flex: 1;
    overflow: hidden;
}

.model {
    position: absolute;
    left: 220px;
    top: 82px;
}

.view-bar {
    position: absolute;
    left: 400px;
    top: 6px;
    display: flex;
    gap: 6px;
}

.view-bar .caret {
    border-top-color: #888;
}

.line-format {
    position: absolute;
    left: 74px;
    top: 19px;
    width: 177px;
    padding: 3px 5px 5px;
    border: 1px solid #222;
    background: linear-gradient(#cfcfcf, #dcdcdc);
    box-shadow: 0 2px 10px 2px rgba(0, 0, 0, 0.7);
}

.line-title {
    display: flex;
    align-items: center;
    justify-content: space-between;
    height: 18px;
    padding-left: 2px;
}

.line-close {
    width: 16px;
    height: 15px;
    border: 1px solid #9c4444;
    background: #cc6c6c;
    color: #6c2424;
}

.line-close .icon {
    width: 8px;
    height: 8px;
}

.line-tools {
    display: flex;
    align-items: center;
    gap: 6px;
    height: 31px;
    padding-left: 7px;
    border: 1px solid #444;
    background: #dedede;
}

.pointer {
    position: absolute;
    left: 111px;
    top: 160px;
}

.triad {
    position: absolute;
    left: 8px;
    bottom: 40px;
    font-size: 11px;
}

.task-pane {
    position: absolute;
    right: 0;
    top: 36px;
    width: 22px;
    border: 1px solid #333;
    border-right: none;
}

.task-pane button {
    width: 100%;
    height: 22px;
    background: #ababab;
}

.task-pane button + button {
    border-top: 1px solid #333;
}

.task-pane .active {
    background: #ececec;
}

/* sheet tabs and status */
.sheet-row {
    display: flex;
    height: 14px;
    flex: none;
    border-top: 1px solid #222;
    background: #e4e4e8;
}

.sheet-nav {
    display: flex;
    padding-left: 26px;
    background: #f2f2f4;
}

.sheet-nav button {
    width: 15px;
    border: 1px solid #999;
    background: #b4b4b4;
    opacity: 0.6;
}

.bar {
    width: 1px;
    height: 6px;
    background: #333;
}

.sheet {
    padding: 0 8px;
    border-left: 1px solid #333;
    border-bottom: 1px solid #333;
    background: #a8a8a8;
}

.sheet:last-child {
    padding-right: 14px;
    border-right: 1px solid #333;
}

.sheet.active {
    border-bottom: none;
    background: #e6e7e9;
    font-weight: bold;
    color: #000;
}

.status-bar {
    display: flex;
    align-items: center;
    height: 18px;
    flex: none;
    padding: 0 4px 0 2px;
    border-top: 1px solid #333;
}

.edition {
    flex: 1;
}

.units {
    gap: 26px;
    margin-right: 14px;
}

.status-bar .icon {
    width: 14px;
    height: 14px;
}

.status-bar button:last-child {
    margin-left: 54px;
}
```
